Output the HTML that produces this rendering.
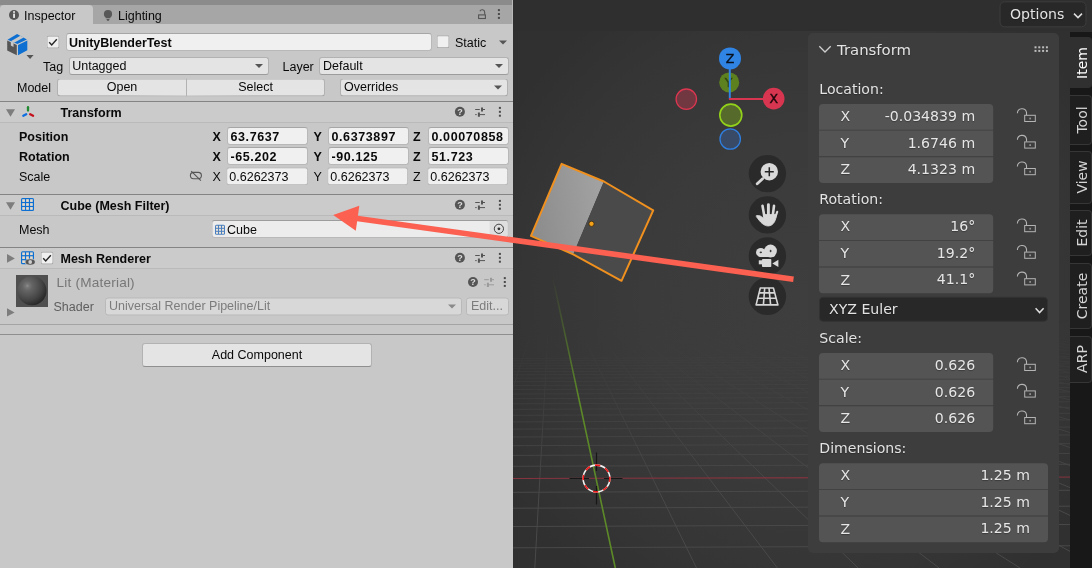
<!DOCTYPE html>
<html>
<head>
<meta charset="utf-8">
<title>Inspector</title>
<style>
*{box-sizing:border-box;margin:0;padding:0}
html,body{width:1092px;height:568px;overflow:hidden;background:#3a3a3a}
body{position:relative;font-family:"Liberation Sans",sans-serif;font-size:12.5px;color:#090909}
#r{position:absolute;left:0;top:0;width:1092px;height:568px;overflow:hidden;will-change:transform}
#r div,#r svg{position:absolute}
svg{overflow:visible}
.t{white-space:nowrap;line-height:16px;height:16px}
.b{font-weight:bold}
.fld{background:#f0f0f0;border:1px solid #b8b8b8;border-top-color:#a6a6a6;border-radius:3px;height:18px}
.fld .t{left:2px;top:0px;transform:translate(0.5px,0.0px)}
.btn{background:#e4e4e4;border:1px solid #b2b2b2;border-bottom-color:#9c9c9c;border-radius:3px;height:17px}
.btn .t{top:-1.4px}
.cb{background:#f0f0f0;border:1px solid #a6a6a6;border-top-color:#969696;border-radius:2px;width:13px;height:13px}
.tri{width:0;height:0;border-left:4px solid transparent;border-right:4px solid transparent;border-top:4.5px solid #555}
.bl{font-family:"DejaVu Sans",sans-serif;color:#e3e3e3;font-size:14.1px;text-shadow:0 1px 1px rgba(0,0,0,.3);white-space:nowrap;line-height:18px;height:18px}
.bf{height:26px;width:174.2px;font-family:"DejaVu Sans",sans-serif;color:#e6e6e6;font-size:14.1px;text-shadow:0 1px 1px rgba(0,0,0,.3)}
.bf.w{width:229px}
.bf.f{border-radius:4px 4px 0 0}
.bf.l{border-radius:0 0 4px 4px}
.bf .n{left:21px;top:3px;transform:translate(0.5px,0.1px);line-height:18px;white-space:nowrap}
.bf .v{right:18px;top:3.1px;line-height:18px;white-space:nowrap}
.tab{left:1070px;width:22px;background:#1f1f1f;border-radius:0 4px 4px 0;border:1px solid #363636;border-left:none}
.tab span{position:absolute;left:11.5px;top:50%;transform:translate(-50%,-50%) rotate(-90deg);font-family:"DejaVu Sans",sans-serif;font-size:14px;color:#d4d4d4;white-space:nowrap;line-height:18px}
</style>
</head>
<body>
<div id="r">

<div style="left:513px;top:0;width:579px;height:568px;background:radial-gradient(ellipse 60% 62% at 50% 53%,#3e3e3e 0%,#3b3b3b 45%,#353535 80%,#303030 100%)"></div>
<div style="left:513px;top:0;width:579px;height:31px;background:#2f2f2f"></div>
<svg id="vp" style="left:0;top:0" width="1092" height="568" viewBox="0 0 1092 568">
<defs><linearGradient id="gf" x1="0" y1="320" x2="0" y2="490" gradientUnits="userSpaceOnUse"><stop offset="0" stop-color="#fff" stop-opacity="0"/><stop offset="0.45" stop-color="#fff" stop-opacity="0.4"/><stop offset="1" stop-color="#fff" stop-opacity="1"/></linearGradient><linearGradient id="gf2" x1="0" y1="275" x2="0" y2="400" gradientUnits="userSpaceOnUse"><stop offset="0" stop-color="#fff" stop-opacity="0"/><stop offset="1" stop-color="#fff" stop-opacity="1"/></linearGradient><mask id="gm2" maskUnits="userSpaceOnUse" x="513" y="270" width="579" height="298"><rect x="513" y="270" width="579" height="298" fill="url(#gf2)"/></mask><linearGradient id="cf" x1="535" y1="215" x2="600" y2="205" gradientUnits="userSpaceOnUse"><stop offset="0" stop-color="#8d8d8d"/><stop offset="1" stop-color="#a1a1a1"/></linearGradient><mask id="gm" maskUnits="userSpaceOnUse" x="513" y="270" width="579" height="298"><rect x="513" y="270" width="579" height="298" fill="url(#gf)"/></mask></defs>
<g mask="url(#gm)"><path d="M513 358.5L1092 356.4M513 360.8L1092 358.7M513 363.3L1092 361.2M513 365.9L1092 363.8M513 368.7L1092 366.6M513 371.7L1092 369.6M513 374.8L1092 372.7M513 378.2L1092 376.1M513 381.7L1092 379.6M513 385.5L1092 383.4M513 389.6L1092 387.5M513 394.0L1092 391.9M513 398.7L1092 396.6M513 403.8L1092 401.7M513 409.3L1092 407.2M513 415.3L1092 413.2M513 421.9L1092 419.8M513 429.1L1092 427.0M513 437.0L1092 434.9M513 445.7L1092 443.6M513 455.4L1092 453.3M513 466.3L1092 464.2M513 492.3L1092 490.2M513 508.2L1092 506.1M513 526.5L1092 524.4M513 547.8L1092 545.7M534.1 300L373.0 568M541.9 300L453.9 568M549.8 300L534.8 568M565.5 300L696.5 568M573.3 300L777.4 568M581.2 300L858.2 568M589.0 300L939.1 568M596.9 300L1020.0 568M604.7 300L1100.8 568M612.6 300L1181.7 568M620.4 300L1262.6 568M628.3 300L1343.4 568M636.1 300L1424.3 568M643.9 300L1505.2 568M651.8 300L1586.0 568M659.6 300L1666.9 568M667.5 300L1747.8 568M675.3 300L1828.6 568M683.2 300L1909.5 568M691.0 300L1990.4 568M698.9 300L2071.2 568M706.7 300L2152.1 568M714.6 300L2233.0 568M722.4 300L2313.8 568M730.3 300L2394.7 568M738.1 300L2475.6 568M746.0 300L2556.4 568M753.8 300L2637.3 568M761.7 300L2718.2 568M769.5 300L2799.1 568M777.3 300L2879.9 568M785.2 300L2960.8 568M793.0 300L3041.7 568M800.9 300L3122.5 568M808.7 300L3203.4 568M816.6 300L3284.3 568M824.4 300L3365.1 568M832.3 300L3446.0 568M840.1 300L3526.9 568M848.0 300L3607.7 568M855.8 300L3688.6 568M863.7 300L3769.5 568" stroke="#494949" stroke-width="1" fill="none"/></g>
<line x1="513" y1="478.5" x2="1092" y2="477" stroke="#84343f" stroke-width="1.1"/>
<g mask="url(#gm2)"><line x1="551.4" y1="271.2" x2="615.3" y2="568" stroke="#5d8a28" stroke-width="1.6"/></g>
<polygon points="561.6,163.9 603.9,181.5 573.2,254.4 531,235.8" fill="url(#cf)"/>
<polygon points="603.9,181.5 653.2,210.4 621.5,280.8 573.2,254.4" fill="#4a4a4a"/>
<polygon points="561.6,163.9 603.9,181.5 653.2,210.4 621.5,280.8 573.2,254.4 531,235.8" fill="none" stroke="#f0901e" stroke-width="2" stroke-linejoin="round"/>
<circle cx="591.5" cy="223.8" r="2.6" fill="#f5a21b" stroke="#3a2a10" stroke-width="0.8"/>
<g stroke="#171717" stroke-width="1.2"><path d="M596.5 452.5V471M596.5 486V504.5M569.5 478.5H589M604 478.5H622.5"/></g>
<circle cx="596.5" cy="478.5" r="13.4" fill="none" stroke="#f2f2f2" stroke-width="1.6"/>
<circle cx="596.5" cy="478.5" r="13.4" fill="none" stroke="#ee1c1c" stroke-width="1.6" stroke-dasharray="5.262" transform="rotate(-8 596.5 478.5)"/>
<circle cx="729.2" cy="82.4" r="10" fill="#5e8120"/>
<text x="728.6" y="87" text-anchor="middle" font-family="DejaVu Sans, sans-serif" font-size="12.5" fill="#2f4210" stroke="#2f4210" stroke-width="0.4">Y</text>
<line x1="729.8" y1="99.3" x2="729.8" y2="68" stroke="#2f84e4" stroke-width="2"/>
<line x1="729" y1="99" x2="764" y2="99" stroke="#d83650" stroke-width="2"/>
<circle cx="730" cy="58.4" r="11" fill="#2f84e4"/>
<circle cx="773.7" cy="98.6" r="10.8" fill="#d83650"/>
<circle cx="686.3" cy="99.2" r="10.2" fill="#713842" stroke="#dc3650" stroke-width="1.3"/>
<circle cx="730.8" cy="115.1" r="11" fill="#566a2c" stroke="#93d21a" stroke-width="1.6"/>
<circle cx="730.2" cy="139" r="10.2" fill="#384a66" stroke="#2f7fe0" stroke-width="1.3"/>
<text x="730" y="63" text-anchor="middle" font-family="DejaVu Sans, sans-serif" font-size="12.5" fill="#08121f" stroke="#08121f" stroke-width="0.4">Z</text>
<text x="773.7" y="103.2" text-anchor="middle" font-family="DejaVu Sans, sans-serif" font-size="12.5" fill="#1f060b" stroke="#1f060b" stroke-width="0.4">X</text>
<circle cx="767.4" cy="173.6" r="18.7" fill="#2a2a2a"/>
<circle cx="767.4" cy="214.9" r="18.7" fill="#2a2a2a"/>
<circle cx="767.4" cy="256" r="18.7" fill="#2a2a2a"/>
<circle cx="767.4" cy="296.4" r="18.7" fill="#2a2a2a"/>
<line x1="762.6" y1="178.8" x2="757.2" y2="183.8" stroke="#d6d6d6" stroke-width="2.8" stroke-linecap="round"/>
<circle cx="769.3" cy="171.7" r="8.7" fill="#d9d9d9"/>
<path d="M769.3 167.2V176.2M764.8 171.7H773.8" stroke="#242424" stroke-width="1.5"/>
<g fill="#d9d9d9" stroke="#d9d9d9" stroke-linecap="round">
<path d="M762.5 205.8L764.3 216" stroke-width="2.6"/>
<path d="M768.4 204.8V216" stroke-width="2.9"/>
<path d="M774 205.8L772.7 216" stroke-width="2.6"/>
<path d="M777.2 211.8L775.3 217.5" stroke-width="2.1"/>
<path d="M756.6 215.6C759 215 761.5 216 763.2 218.3L763.5 214.5H776.2C776.4 220 773.5 225.8 768.3 226C764 226 760.5 222.5 756.6 217Z" stroke-width="0.8" stroke-linejoin="round"/>
</g>
<g fill="#d9d9d9">
<ellipse cx="760.9" cy="252.4" rx="4.9" ry="4.3"/><circle cx="770.5" cy="251" r="6.4"/><rect x="758" y="251" width="17" height="6" rx="2.5"/>
<rect x="762" y="258.9" width="9.3" height="8.2" rx="0.8"/><rect x="758.8" y="260.3" width="4" height="4"/>
<polygon points="772.3,263.5 778.4,259.8 778.4,267.1"/>
</g>
<ellipse cx="760.8" cy="252.4" rx="1.2" ry="0.8" fill="#3a3a3a"/><ellipse cx="770.6" cy="251" rx="0.9" ry="1.3" fill="#3a3a3a"/>
<path d="M760.3 288H773.4L777.9 304.9H756.1ZM759.1 292.9H774.7M757.8 298.2H776.1M764.7 288L763.4 304.9M769 288L770.6 304.9" fill="none" stroke="#d6d6d6" stroke-width="1.6" stroke-linejoin="round"/>
</svg>
<div style="left:808px;top:33px;width:251px;height:520px;background:#3d3d3d;border-radius:5px"></div>
<div style="left:1070px;top:32px;width:22px;height:536px;background:#181818"></div>
<div style="left:999px;top:1px;transform:translate(0.5px,0.3px);width:87px;height:26px;background:#282828;border:1px solid #3d3d3d;border-radius:5px"></div>
<div class="bl" style="left:1010px;top:4px;transform:translate(0.0px,0.8px)">Options</div>
<div class="tab" style="top:37px;height:51px;background:#303030;border-color:#303030;"><span style="color:#fff">Item</span></div>
<div class="tab" style="top:94.5px;height:50.5px;"><span style="">Tool</span></div>
<div class="tab" style="top:150.5px;height:53.5px;"><span style="">View</span></div>
<div class="tab" style="top:210px;height:45.5px;"><span style="">Edit</span></div>
<div class="tab" style="top:262.5px;height:66px;"><span style="">Create</span></div>
<div class="tab" style="top:335.5px;height:47px;"><span style="">ARP</span></div>
<div class="bl" style="left:837px;top:40px;transform:translate(0.0px,0.6px);font-size:14.9px">Transform</div>
<div class="bl" style="left:819px;top:80px;transform:translate(0.3px,0.21px)">Location:</div>
<svg style="left:0;top:0" width="1092" height="568" viewBox="0 0 1092 568"><path d="M819 129.75V108.00Q819 104.00 823 104.00H989.20Q993.20 104.00 993.20 108.00V129.75ZM819 130.60H993.20V156.35H819ZM819 157.20H993.20V179.10Q993.20 183.10 989.20 183.10H823Q819 183.10 819 179.10Z" fill="#545454"/></svg>
<div class="bf f" style="left:819px;top:104.0px"><div class="n">X</div><div class="v">-0.034839 m</div></div>
<div class="bf" style="left:819px;top:130px;transform:translate(0.0px,0.6px)"><div class="n">Y</div><div class="v">1.6746 m</div></div>
<div class="bf l" style="left:819px;top:157px;transform:translate(0.0px,0.2px)"><div class="n">Z</div><div class="v">4.1323 m</div></div>
<div class="bl" style="left:819px;top:190px;transform:translate(0.3px,0.46px)">Rotation:</div>
<svg style="left:0;top:0" width="1092" height="568" viewBox="0 0 1092 568"><path d="M819 239.95V218.20Q819 214.20 823 214.20H989.20Q993.20 214.20 993.20 218.20V239.95ZM819 240.80H993.20V266.55H819ZM819 267.40H993.20V289.30Q993.20 293.30 989.20 293.30H823Q819 293.30 819 289.30Z" fill="#545454"/></svg>
<div class="bf f" style="left:819px;top:214px;transform:translate(0.0px,0.2px)"><div class="n">X</div><div class="v">16°</div></div>
<div class="bf" style="left:819px;top:240px;transform:translate(0.0px,0.8px)"><div class="n">Y</div><div class="v">19.2°</div></div>
<div class="bf l" style="left:819px;top:267px;transform:translate(0.0px,0.4px)"><div class="n">Z</div><div class="v">41.1°</div></div>
<div style="left:819px;top:296px;transform:translate(0.0px,0.8px);width:229px;height:25px;background:#282828;border-radius:4px;border:1px solid #333"></div>
<div class="bl" style="left:829px;top:299px;transform:translate(0.0px,0.9px)">XYZ Euler</div>
<div class="bl" style="left:819px;top:328px;transform:translate(0.3px,0.66px)">Scale:</div>
<svg style="left:0;top:0" width="1092" height="568" viewBox="0 0 1092 568"><path d="M819 378.75V357.00Q819 353.00 823 353.00H989.20Q993.20 353.00 993.20 357.00V378.75ZM819 379.60H993.20V405.35H819ZM819 406.20H993.20V428.10Q993.20 432.10 989.20 432.10H823Q819 432.10 819 428.10Z" fill="#545454"/></svg>
<div class="bf f" style="left:819px;top:353.0px"><div class="n">X</div><div class="v">0.626</div></div>
<div class="bf" style="left:819px;top:379px;transform:translate(0.0px,0.6px)"><div class="n">Y</div><div class="v">0.626</div></div>
<div class="bf l" style="left:819px;top:406px;transform:translate(0.0px,0.2px)"><div class="n">Z</div><div class="v">0.626</div></div>
<div class="bl" style="left:819px;top:439px;transform:translate(0.3px,0.16px)">Dimensions:</div>
<svg style="left:0;top:0" width="1092" height="568" viewBox="0 0 1092 568"><path d="M819 488.95V467.20Q819 463.20 823 463.20H1044.00Q1048.00 463.20 1048.00 467.20V488.95ZM819 489.80H1048.00V515.55H819ZM819 516.40H1048.00V538.30Q1048.00 542.30 1044.00 542.30H823Q819 542.30 819 538.30Z" fill="#545454"/></svg>
<div class="bf w f" style="left:819px;top:463px;transform:translate(0.0px,0.2px)"><div class="n">X</div><div class="v">1.25 m</div></div>
<div class="bf w" style="left:819px;top:489px;transform:translate(0.0px,0.8px)"><div class="n">Y</div><div class="v">1.25 m</div></div>
<div class="bf w l" style="left:819px;top:516px;transform:translate(0.0px,0.4px)"><div class="n">Z</div><div class="v">1.25 m</div></div>
<div style="left:0;top:0;width:513px;height:568px;background:#c8c8c8"></div>
<div style="left:0;top:0;width:513px;height:5px;background:#8b8b8b"></div>
<div style="left:0;top:5px;width:513px;height:19px;background:#a6a6a6"></div>
<div style="left:0;top:5px;width:93px;height:19px;background:#c8c8c8;border-radius:4px 4px 0 0"></div>
<div class="t" style="left:24px;top:7px;transform:translate(0.0px,0.6px)">Inspector</div>
<div class="t" style="left:118px;top:7px;transform:translate(0.0px,0.6px)">Lighting</div>
<div style="left:512px;top:0;width:1px;height:24px;background:#b9b9b9"></div>
<div class="cb" style="left:46px;top:35px;transform:translate(0.5px,0.5px)"></div>
<div class="fld" style="left:66px;top:33px;width:366px;height:18px"><div class="t b" style="left:2px;top:0px;transform:translate(0.0px,0.5px)">UnityBlenderTest</div></div>
<div class="cb" style="left:436px;top:35px;transform:translate(0.5px,0.3px)"></div>
<div class="t" style="left:455px;top:34px;transform:translate(0.0px,0.5px)">Static</div>
<div class="tri" style="left:499px;top:40px;transform:translate(0.0px,0.5px)"></div>
<div class="t" style="left:43px;top:58px;transform:translate(0.0px,0.5px)">Tag</div>
<div class="btn" style="left:69px;top:57px;width:199.5px;height:18px"><div class="t" style="left:2.2px;top:0">Untagged</div><div class="tri" style="right:5px;top:6px"></div></div>
<div class="t" style="left:282px;top:58px;transform:translate(0.5px,0.5px)">Layer</div>
<div class="btn" style="left:319px;top:57px;width:189.5px;height:18px"><div class="t" style="left:3px;top:0">Default</div><div class="tri" style="right:5px;top:6px"></div></div>
<div class="t" style="left:17px;top:79px;transform:translate(0.0px,0.5px)">Model</div>
<div class="btn" style="left:57px;top:78px;transform:translate(0.0px,0.5px);height:17.5px;width:130px;border-radius:3px 0 0 3px"><div class="t" style="left:0;width:128px;text-align:center">Open</div></div>
<div class="btn" style="left:186px;top:78px;transform:translate(0.0px,0.5px);height:17.5px;width:139px;border-radius:0 3px 3px 0"><div class="t" style="left:0;width:137px;text-align:center">Select</div></div>
<div class="btn" style="left:340px;top:78px;transform:translate(0.0px,0.5px);height:17.5px;width:168px"><div class="t" style="left:3px">Overrides</div><div class="tri" style="right:5px;top:6px"></div></div>
<div style="left:0;top:101px;width:513px;height:22px;background:#cbcbcb;border-top:1px solid #848484;border-bottom:1px solid #bababa"></div>
<div class="t b" style="left:60px;top:104px;transform:translate(0.5px,0.5px)">Transform</div>
<div class="t b" style="left:19px;top:129px;transform:translate(0.0px,0.1px)">Position</div>
<div class="t b" style="left:212px;top:129px;transform:translate(0.5px,0.1px)">X</div>
<div class="fld" style="left:227px;top:127px;width:81px"><div class="t b" style="left:2px;top:0px;transform:translate(0.5px,0.8px);letter-spacing:0.6px">63.7637</div></div>
<div class="t b" style="left:313px;top:129px;transform:translate(0.5px,0.1px)">Y</div>
<div class="fld" style="left:328px;top:127px;width:80.5px"><div class="t b" style="left:2px;top:0px;transform:translate(0.5px,0.8px);letter-spacing:0.6px">0.6373897</div></div>
<div class="t b" style="left:413px;top:129px;transform:translate(0.0px,0.1px)">Z</div>
<div class="fld" style="left:428px;top:127px;width:80.5px"><div class="t b" style="left:2px;top:0px;transform:translate(0.5px,0.8px);letter-spacing:0.6px">0.00070858</div></div>
<div class="t b" style="left:19px;top:149px;transform:translate(0.0px,0.1px)">Rotation</div>
<div class="t b" style="left:212px;top:149px;transform:translate(0.5px,0.1px)">X</div>
<div class="fld" style="left:227px;top:147px;width:81px"><div class="t b" style="left:2px;top:0px;transform:translate(0.5px,0.8px);letter-spacing:0.6px">-65.202</div></div>
<div class="t b" style="left:313px;top:149px;transform:translate(0.5px,0.1px)">Y</div>
<div class="fld" style="left:328px;top:147px;width:80.5px"><div class="t b" style="left:2px;top:0px;transform:translate(0.5px,0.8px);letter-spacing:0.6px">-90.125</div></div>
<div class="t b" style="left:413px;top:149px;transform:translate(0.0px,0.1px)">Z</div>
<div class="fld" style="left:428px;top:147px;width:80.5px"><div class="t b" style="left:2px;top:0px;transform:translate(0.5px,0.8px);letter-spacing:0.6px">51.723</div></div>
<div class="t" style="left:19px;top:169px;transform:translate(0.0px,0.4px)">Scale</div>
<div class="t" style="left:212px;top:169px;transform:translate(0.5px,0.4px)">X</div>
<div class="fld" style="left:226px;top:167px;transform:translate(0.2px,0.3px);width:81.8px"><div class="t" style="left:2px;top:0px;transform:translate(0.1px,0.8px)">0.6262373</div></div>
<div class="t" style="left:313px;top:169px;transform:translate(0.5px,0.4px)">Y</div>
<div class="fld" style="left:327px;top:167px;transform:translate(0.2px,0.3px);width:81.3px"><div class="t" style="left:2px;top:0px;transform:translate(0.1px,0.8px)">0.6262373</div></div>
<div class="t" style="left:413px;top:169px;transform:translate(0.0px,0.4px)">Z</div>
<div class="fld" style="left:427px;top:167px;transform:translate(0.2px,0.3px);width:81.3px"><div class="t" style="left:2px;top:0px;transform:translate(0.1px,0.8px)">0.6262373</div></div>
<div style="left:0;top:194px;width:513px;height:22px;background:#cbcbcb;border-top:1px solid #848484;border-bottom:1px solid #bababa"></div>
<div class="t b" style="left:60px;top:197px;transform:translate(0.5px,0.5px)">Cube (Mesh Filter)</div>
<div class="t" style="left:19px;top:221px;transform:translate(0.0px,0.5px)">Mesh</div>
<div class="fld" style="left:211px;top:220px;transform:translate(0.5px,0.0px);width:297px;background:#ececec;border-top-color:#9c9c9c"><div class="t" style="left:14px;top:0px;transform:translate(0.5px,0.5px)">Cube</div><div style="right:0;top:0;width:18px;height:16px;background:#dfdfdf;border-radius:0 2px 2px 0"></div></div>
<div style="left:0;top:247px;width:513px;height:22px;background:#cbcbcb;border-top:1px solid #848484;border-bottom:1px solid #bababa"></div>
<div class="cb" style="left:40px;top:251px;transform:translate(0.5px,0.5px)"></div>
<div class="t b" style="left:60px;top:250px;transform:translate(0.5px,0.5px)">Mesh Renderer</div>
<div style="left:16px;top:275px;width:32px;height:32px;background:#4f4f4f"></div>
<div style="left:17px;top:276px;transform:translate(0.5px,0.3px);width:28.6px;height:29px;border-radius:50%;background:radial-gradient(circle farthest-corner at 34% 33%,#909090 0%,#787878 6%,#646464 18%,#565656 34%,#434343 54%,#2c2c2c 72%,#222 82%)"></div>
<div class="t" style="left:56px;top:274px;transform:translate(0.5px,0.5px);color:#777;font-size:13.6px;letter-spacing:0.2px">Lit (Material)</div>
<div class="t" style="left:53px;top:298px;transform:translate(0.5px,0.5px);color:#5e5e5e">Shader</div>
<div class="btn" style="left:105px;top:297px;transform:translate(0.0px,0.5px);height:17.5px;width:356.5px;background:#d8d8d8;border-color:#b9b9b9"><div class="t" style="left:3px;color:#7c7c7c">Universal Render Pipeline/Lit</div><div class="tri" style="right:5px;top:5.5px;border-top-color:#8a8a8a"></div></div>
<div class="btn" style="left:466px;top:297px;transform:translate(0.0px,0.5px);height:17.5px;width:42.5px;background:#d8d8d8;border-color:#b9b9b9"><div class="t" style="left:0;width:40px;text-align:center;color:#7c7c7c">Edit...</div></div>
<div style="left:0;top:323.5px;width:513px;height:1px;background:#a4a4a4"></div>
<div style="left:0;top:334px;width:513px;height:1px;background:#8e8e8e"></div>
<div class="btn" style="left:142px;top:343px;width:230px;height:24px;background:#e4e4e4;border-bottom-color:#8f8f8f"><div class="t" style="left:0;width:228px;text-align:center;top:3px">Add Component</div></div>
<svg id="ov" style="left:0;top:0" width="1092" height="568" viewBox="0 0 1092 568">
<circle cx="14" cy="15" r="5" fill="#555"/><rect x="13.1" y="13.6" width="1.9" height="4.3" fill="#e4e4e4"/><circle cx="14.05" cy="12" r="1.05" fill="#e4e4e4"/>
<circle cx="108" cy="14" r="4.1" fill="#585858"/><path d="M105.8 16.5H110.2V18.3H105.8ZM106.4 19H109.6L108.9 20.8H107.1Z" fill="#585858"/>
<rect x="478.6" y="14.9" width="6.8" height="3.6" fill="none" stroke="#555" stroke-width="1.1"/><path d="M484.7 14.6V12.4A2.5 2.6 0 0 0 479.9 11.3" fill="none" stroke="#555" stroke-width="1.1"/>
<rect x="497.9" y="9.1" width="2" height="2" fill="#4a4a4a"/>
<rect x="497.9" y="13" width="2" height="2" fill="#4a4a4a"/>
<rect x="497.9" y="16.9" width="2" height="2" fill="#4a4a4a"/>
<polygon points="17.1,34 26.9,39.4 17.4,44.1 7.5,39.7" fill="#0d6fd1"/>
<polygon points="10.8,41.15 14.1,42.65 23.7,37.6 20.3,35.8" fill="#c8c8c8"/>
<polygon points="7.2,40.5 16.8,45.1 16.8,55.3 7.2,50.4" fill="#555"/>
<polygon points="10.8,41.5 13.5,42.8 13.5,46.9 10.8,45.6" fill="#c8c8c8"/>
<polygon points="18,45.1 27.3,40.4 27.3,50.2 18,55.3" fill="#0d6fd1"/>
<polygon points="26.5,54.9 33.6,54.9 30.05,59" fill="#555"/>
<path d="M49.2 42.3l2.5 2.6l5.1-5.6" fill="none" stroke="#262626" stroke-width="1.4"/>
<path d="M43.2 258.3l2.5 2.6l5.1-5.6" fill="none" stroke="#262626" stroke-width="1.4"/>
<polygon points="6,109.2 15,109.2 10.5,116.8" fill="#7d7d7d"/>
<polygon points="6,202.2 15,202.2 10.5,209.79999999999998" fill="#7d7d7d"/>
<polygon points="7,254.1 7,262.8 14.9,258.45" fill="#7d7d7d"/>
<polygon points="7,308.2 7,316.6 14.6,312.4" fill="#7d7d7d"/>
<g stroke-linecap="round" stroke-width="2.3"><path d="M28 107.2V110.6" stroke="#1f8a2f"/><path d="M23.3 115.7L26.2 114.2" stroke="#0d6fe0"/><path d="M30.2 114.2L33.1 115.7" stroke="#c4101c"/></g>
<rect x="21" y="198" width="13" height="13" rx="1.5" fill="#0d6fd1"/>
<rect x="22.20" y="199.20" width="2.73" height="2.73" fill="#e9dccb"/>
<rect x="22.20" y="203.13" width="2.73" height="2.73" fill="#e9dccb"/>
<rect x="22.20" y="207.07" width="2.73" height="2.73" fill="#e9dccb"/>
<rect x="26.13" y="199.20" width="2.73" height="2.73" fill="#e9dccb"/>
<rect x="26.13" y="203.13" width="2.73" height="2.73" fill="#e9dccb"/>
<rect x="26.13" y="207.07" width="2.73" height="2.73" fill="#e9dccb"/>
<rect x="30.07" y="199.20" width="2.73" height="2.73" fill="#e9dccb"/>
<rect x="30.07" y="203.13" width="2.73" height="2.73" fill="#e9dccb"/>
<rect x="30.07" y="207.07" width="2.73" height="2.73" fill="#e9dccb"/>
<rect x="21" y="251.2" width="13" height="13" rx="1.5" fill="#0d6fd1"/>
<rect x="22.20" y="252.40" width="2.73" height="2.73" fill="#e9dccb"/>
<rect x="22.20" y="256.33" width="2.73" height="2.73" fill="#e9dccb"/>
<rect x="22.20" y="260.27" width="2.73" height="2.73" fill="#e9dccb"/>
<rect x="26.13" y="252.40" width="2.73" height="2.73" fill="#e9dccb"/>
<rect x="26.13" y="256.33" width="2.73" height="2.73" fill="#e9dccb"/>
<rect x="26.13" y="260.27" width="2.73" height="2.73" fill="#e9dccb"/>
<rect x="30.07" y="252.40" width="2.73" height="2.73" fill="#e9dccb"/>
<rect x="30.07" y="256.33" width="2.73" height="2.73" fill="#e9dccb"/>
<rect x="30.07" y="260.27" width="2.73" height="2.73" fill="#e9dccb"/>
<ellipse cx="30.2" cy="262" rx="5.4" ry="3.6" fill="#cbcbcb"/><ellipse cx="30.2" cy="262" rx="4.7" ry="2.8" fill="#555"/><circle cx="30.2" cy="262" r="1.9" fill="#cdcdcd"/>
<rect x="215" y="224.8" width="10" height="10" rx="1.5" fill="#4a7fc0"/>
<rect x="216.00" y="225.80" width="2.00" height="2.00" fill="#ece4d8"/>
<rect x="216.00" y="228.80" width="2.00" height="2.00" fill="#ece4d8"/>
<rect x="216.00" y="231.80" width="2.00" height="2.00" fill="#ece4d8"/>
<rect x="219.00" y="225.80" width="2.00" height="2.00" fill="#ece4d8"/>
<rect x="219.00" y="228.80" width="2.00" height="2.00" fill="#ece4d8"/>
<rect x="219.00" y="231.80" width="2.00" height="2.00" fill="#ece4d8"/>
<rect x="222.00" y="225.80" width="2.00" height="2.00" fill="#ece4d8"/>
<rect x="222.00" y="228.80" width="2.00" height="2.00" fill="#ece4d8"/>
<rect x="222.00" y="231.80" width="2.00" height="2.00" fill="#ece4d8"/>
<circle cx="459.9" cy="111.8" r="5" fill="#555"/><text x="459.9" y="115.0" text-anchor="middle" font-family="Liberation Sans, sans-serif" font-weight="bold" font-size="9" fill="#dedede">?</text>
<path d="M475.2 109.5h4.6M482.0 109.5h3M475.2 114.6h1.5M478.9 114.6h6.1" stroke="#555" stroke-width="1" fill="none"/><path d="M482.0 107.5v4M478.9 112.5v4.2" stroke="#555" stroke-width="2" fill="none"/>
<rect x="498.9" y="106.89999999999999" width="2" height="2" fill="#4a4a4a"/>
<rect x="498.9" y="110.8" width="2" height="2" fill="#4a4a4a"/>
<rect x="498.9" y="114.7" width="2" height="2" fill="#4a4a4a"/>
<circle cx="459.9" cy="204.8" r="5" fill="#555"/><text x="459.9" y="208.0" text-anchor="middle" font-family="Liberation Sans, sans-serif" font-weight="bold" font-size="9" fill="#dedede">?</text>
<path d="M475.2 202.5h4.6M482.0 202.5h3M475.2 207.60000000000002h1.5M478.9 207.60000000000002h6.1" stroke="#555" stroke-width="1" fill="none"/><path d="M482.0 200.5v4M478.9 205.5v4.2" stroke="#555" stroke-width="2" fill="none"/>
<rect x="498.9" y="199.9" width="2" height="2" fill="#4a4a4a"/>
<rect x="498.9" y="203.8" width="2" height="2" fill="#4a4a4a"/>
<rect x="498.9" y="207.70000000000002" width="2" height="2" fill="#4a4a4a"/>
<circle cx="459.9" cy="257.8" r="5" fill="#555"/><text x="459.9" y="261.0" text-anchor="middle" font-family="Liberation Sans, sans-serif" font-weight="bold" font-size="9" fill="#dedede">?</text>
<path d="M475.2 255.5h4.6M482.0 255.5h3M475.2 260.6h1.5M478.9 260.6h6.1" stroke="#555" stroke-width="1" fill="none"/><path d="M482.0 253.5v4M478.9 258.5v4.2" stroke="#555" stroke-width="2" fill="none"/>
<rect x="498.9" y="252.9" width="2" height="2" fill="#4a4a4a"/>
<rect x="498.9" y="256.8" width="2" height="2" fill="#4a4a4a"/>
<rect x="498.9" y="260.7" width="2" height="2" fill="#4a4a4a"/>
<circle cx="473" cy="282" r="5" fill="#555"/><text x="473" y="285.2" text-anchor="middle" font-family="Liberation Sans, sans-serif" font-weight="bold" font-size="9" fill="#dedede">?</text>
<path d="M484.2 279.7h4.6M491.0 279.7h3M484.2 284.8h1.5M487.9 284.8h6.1" stroke="#9a9a9a" stroke-width="1" fill="none"/><path d="M491.0 277.7v4M487.9 282.7v4.2" stroke="#9a9a9a" stroke-width="2" fill="none"/>
<rect x="503.8" y="277.1" width="2" height="2" fill="#4a4a4a"/>
<rect x="503.8" y="281" width="2" height="2" fill="#4a4a4a"/>
<rect x="503.8" y="284.9" width="2" height="2" fill="#4a4a4a"/>
<rect x="190.4" y="172.4" width="11" height="6.3" rx="3.15" fill="none" stroke="#555" stroke-width="1.1"/><line x1="191.2" y1="171.2" x2="200.9" y2="180.7" stroke="#555" stroke-width="1.1"/>
<circle cx="498.9" cy="228.8" r="4.6" fill="none" stroke="#333" stroke-width="0.9"/><circle cx="498.9" cy="228.8" r="1.4" fill="#333"/>
<path d="M819.3 46.2L825 52L830.7 46.2" fill="none" stroke="#cfcfcf" stroke-width="1.3"/>
<path d="M1074 13.6L1078 17.6L1082 13.6" fill="none" stroke="#dedede" stroke-width="1.5"/>
<path d="M1035.6 308.3L1039.6 312.6L1043.6 308.3" fill="none" stroke="#dedede" stroke-width="1.5"/>
<rect x="1024.7" y="115.3" width="10.6" height="6.2" fill="none" stroke="#b4b4b4" stroke-width="1"/><rect x="1029.5" y="117.6" width="1.2" height="1.8" fill="#b4b4b4"/><path d="M1017.4 113.2A4.6 4.6 0 0 1 1026.5 112.4V115.0" fill="none" stroke="#b4b4b4" stroke-width="1.1"/>
<rect x="1024.7" y="141.9" width="10.6" height="6.2" fill="none" stroke="#b4b4b4" stroke-width="1"/><rect x="1029.5" y="144.2" width="1.2" height="1.8" fill="#b4b4b4"/><path d="M1017.4 139.8A4.6 4.6 0 0 1 1026.5 139.0V141.6" fill="none" stroke="#b4b4b4" stroke-width="1.1"/>
<rect x="1024.7" y="168.5" width="10.6" height="6.2" fill="none" stroke="#b4b4b4" stroke-width="1"/><rect x="1029.5" y="170.8" width="1.2" height="1.8" fill="#b4b4b4"/><path d="M1017.4 166.4A4.6 4.6 0 0 1 1026.5 165.6V168.2" fill="none" stroke="#b4b4b4" stroke-width="1.1"/>
<rect x="1024.7" y="225.5" width="10.6" height="6.2" fill="none" stroke="#b4b4b4" stroke-width="1"/><rect x="1029.5" y="227.8" width="1.2" height="1.8" fill="#b4b4b4"/><path d="M1017.4 223.4A4.6 4.6 0 0 1 1026.5 222.6V225.2" fill="none" stroke="#b4b4b4" stroke-width="1.1"/>
<rect x="1024.7" y="252.1" width="10.6" height="6.2" fill="none" stroke="#b4b4b4" stroke-width="1"/><rect x="1029.5" y="254.4" width="1.2" height="1.8" fill="#b4b4b4"/><path d="M1017.4 250.0A4.6 4.6 0 0 1 1026.5 249.2V251.8" fill="none" stroke="#b4b4b4" stroke-width="1.1"/>
<rect x="1024.7" y="278.7" width="10.6" height="6.2" fill="none" stroke="#b4b4b4" stroke-width="1"/><rect x="1029.5" y="281.0" width="1.2" height="1.8" fill="#b4b4b4"/><path d="M1017.4 276.6A4.6 4.6 0 0 1 1026.5 275.8V278.4" fill="none" stroke="#b4b4b4" stroke-width="1.1"/>
<rect x="1024.7" y="364.3" width="10.6" height="6.2" fill="none" stroke="#b4b4b4" stroke-width="1"/><rect x="1029.5" y="366.6" width="1.2" height="1.8" fill="#b4b4b4"/><path d="M1017.4 362.2A4.6 4.6 0 0 1 1026.5 361.4V364.0" fill="none" stroke="#b4b4b4" stroke-width="1.1"/>
<rect x="1024.7" y="390.9" width="10.6" height="6.2" fill="none" stroke="#b4b4b4" stroke-width="1"/><rect x="1029.5" y="393.2" width="1.2" height="1.8" fill="#b4b4b4"/><path d="M1017.4 388.8A4.6 4.6 0 0 1 1026.5 388.0V390.6" fill="none" stroke="#b4b4b4" stroke-width="1.1"/>
<rect x="1024.7" y="417.5" width="10.6" height="6.2" fill="none" stroke="#b4b4b4" stroke-width="1"/><rect x="1029.5" y="419.8" width="1.2" height="1.8" fill="#b4b4b4"/><path d="M1017.4 415.4A4.6 4.6 0 0 1 1026.5 414.6V417.2" fill="none" stroke="#b4b4b4" stroke-width="1.1"/>
<rect x="1034.5" y="46.3" width="2" height="2" fill="#bdbdbd"/>
<rect x="1034.5" y="49.9" width="2" height="2" fill="#bdbdbd"/>
<rect x="1038.3" y="46.3" width="2" height="2" fill="#bdbdbd"/>
<rect x="1038.3" y="49.9" width="2" height="2" fill="#bdbdbd"/>
<rect x="1042.1" y="46.3" width="2" height="2" fill="#bdbdbd"/>
<rect x="1042.1" y="49.9" width="2" height="2" fill="#bdbdbd"/>
<rect x="1045.9" y="46.3" width="2" height="2" fill="#bdbdbd"/>
<rect x="1045.9" y="49.9" width="2" height="2" fill="#bdbdbd"/>
<line x1="793.5" y1="279.2" x2="352" y2="217.7" stroke="#fc6050" stroke-width="5.6"/>
<polygon points="333.2,215.1 359.3,205.8 355.8,230.8" fill="#fc6050"/>
</svg>
</div>
</body>
</html>
